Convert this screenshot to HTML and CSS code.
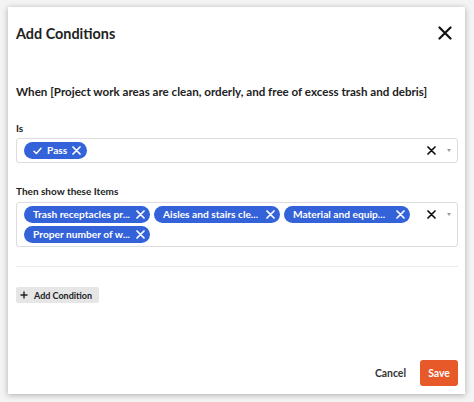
FILE: index.html
```html
<!DOCTYPE html>
<html>
<head>
<meta charset="utf-8">
<link rel="stylesheet" href="styles.css">
</head>
<body>
<div class="page">
  <div class="card">
    <div class="header">
      <h1 class="title">Add Conditions</h1>
      <button class="close" aria-label="Close">
        <svg width="14" height="14" viewBox="0 0 14 14"><path d="M1.5 1.5L12.5 12.5M12.5 1.5L1.5 12.5" stroke="#111" stroke-width="2.2" stroke-linecap="round"/></svg>
      </button>
    </div>
    <div class="content">
      <p class="when">When [Project work areas are clean, orderly, and free of excess trash and debris]</p>

      <div class="label label-is">Is</div>
      <div class="select">
        <div class="chips">
          <span class="chip chip-auto">
            <svg class="check" width="9" height="8" viewBox="0 0 9 8"><path d="M1 4.2L3.4 6.5L8 1.3" stroke="#fff" stroke-width="1.5" fill="none" stroke-linecap="round" stroke-linejoin="round"/></svg>
            <span class="chip-text">Pass</span>
            <svg class="chip-x" width="9" height="9" viewBox="0 0 9 9"><path d="M1 1L8 8M8 1L1 8" stroke="#fff" stroke-width="1.7" stroke-linecap="round"/></svg>
          </span>
        </div>
        <div class="controls">
          <svg class="clear" width="9" height="9" viewBox="0 0 9 9"><path d="M1 1L8 8M8 1L1 8" stroke="#111" stroke-width="1.7" stroke-linecap="round"/></svg>
          <span class="caret"></span>
        </div>
      </div>

      <div class="label label-then">Then show these Items</div>
      <div class="select select-multi">
        <div class="chips">
          <span class="chip chip-fixed"><span class="chip-text">Trash receptacles pr...</span><svg class="chip-x" width="9" height="9" viewBox="0 0 9 9"><path d="M1 1L8 8M8 1L1 8" stroke="#fff" stroke-width="1.7" stroke-linecap="round"/></svg></span>
          <span class="chip chip-fixed"><span class="chip-text">Aisles and stairs cle...</span><svg class="chip-x" width="9" height="9" viewBox="0 0 9 9"><path d="M1 1L8 8M8 1L1 8" stroke="#fff" stroke-width="1.7" stroke-linecap="round"/></svg></span>
          <span class="chip chip-fixed"><span class="chip-text">Material and equip...</span><svg class="chip-x" width="9" height="9" viewBox="0 0 9 9"><path d="M1 1L8 8M8 1L1 8" stroke="#fff" stroke-width="1.7" stroke-linecap="round"/></svg></span>
          <span class="chip chip-fixed"><span class="chip-text">Proper number of w...</span><svg class="chip-x" width="9" height="9" viewBox="0 0 9 9"><path d="M1 1L8 8M8 1L1 8" stroke="#fff" stroke-width="1.7" stroke-linecap="round"/></svg></span>
        </div>
        <div class="controls controls-top">
          <svg class="clear" width="9" height="9" viewBox="0 0 9 9"><path d="M1 1L8 8M8 1L1 8" stroke="#111" stroke-width="1.7" stroke-linecap="round"/></svg>
          <span class="caret"></span>
        </div>
      </div>

      <div class="divider"></div>

      <button class="add-btn">
        <svg width="8" height="8" viewBox="0 0 8 8"><path d="M4 0.5V7.5M0.5 4H7.5" stroke="#222" stroke-width="1.4"/></svg>
        <span>Add Condition</span>
      </button>
    </div>
    <div class="footer">
      <button class="cancel">Cancel</button>
      <button class="save">Save</button>
    </div>
  </div>
</div>
</body>
</html>
```

FILE: styles.css
```css
* { box-sizing: border-box; }

html, body {
  margin: 0;
  padding: 0;
  background: #f4f4f4;
  font-family: Lato, "Noto Sans", sans-serif;
  color: #222;
}

.page {
  width: 474px;
  height: 402px;
  padding: 7px 9px 8px 8px;
}

.card {
  width: 457px;
  height: 387px;
  background: #fff;
  box-shadow: 0 1px 6px rgba(0, 0, 0, 0.3);
  display: flex;
  flex-direction: column;
  padding: 0 7px 8px 8px;
}

.header {
  height: 52px;
  display: flex;
  align-items: center;
  justify-content: space-between;
  flex: none;
}

.title {
  margin: 0;
  font-size: 14.4px;
  font-weight: 700;
  color: #222;
}

.close {
  border: 0;
  background: none;
  padding: 0;
  margin-right: 6px;
  width: 14px;
  height: 14px;
  display: flex;
}

.content {
  flex: none;
}

.when {
  margin: 25px 0 0 0;
  font-size: 11.6px;
  line-height: 16px;
  font-weight: 700;
  color: #222;
}

.label {
  font-size: 10px;
  line-height: 14px;
  font-weight: 700;
  color: #222;
}

.label-is { margin-top: 21px; margin-bottom: 3px; }
.label-then { margin-top: 21px; margin-bottom: 4px; }

.select {
  border: 1px solid #dcdcdc;
  border-radius: 3px;
  padding: 3px 0 3px 7px;
  display: flex;
  align-items: center;
}

.select-multi {
  align-items: flex-start;
}

.chips {
  flex: 1;
  display: flex;
  flex-wrap: wrap;
  gap: 3px 4px;
}

.chip {
  height: 17px;
  border-radius: 9px;
  background: #3462d8;
  color: #fff;
  font-size: 10.2px;
  font-weight: 700;
  display: inline-flex;
  align-items: center;
  white-space: nowrap;
}

.chip-auto {
  padding: 0 6px 0 9px;
  gap: 5px;
}

.chip-fixed {
  width: 126px;
  padding: 0 5px 0 9px;
  justify-content: space-between;
}

.chip-text {
  line-height: 17px;
}

.chip-x { flex: none; }
.check { flex: none; }

.controls {
  display: flex;
  align-items: center;
  width: 46px;
  padding-left: 16px;
  gap: 11px;
  flex: none;
}

.controls-top {
  height: 17px;
}

.caret {
  width: 0;
  height: 0;
  border-left: 2.5px solid transparent;
  border-right: 2.5px solid transparent;
  border-top: 3px solid #999;
}

.divider {
  margin-top: 19px;
  height: 1px;
  background: #ececec;
}

.add-btn {
  margin-top: 20px;
  height: 16px;
  border: 0;
  border-radius: 2px;
  background: #e6e6e6;
  padding: 0 7px 0 4px;
  display: inline-flex;
  align-items: center;
  gap: 6px;
  font-family: Lato, "Noto Sans", sans-serif;
  font-size: 9px;
  font-weight: 700;
  color: #222;
}

.footer {
  margin-top: auto;
  display: flex;
  justify-content: flex-end;
  align-items: center;
  gap: 14px;
}

.cancel {
  border: 0;
  background: none;
  padding: 0;
  font-family: Lato, "Noto Sans", sans-serif;
  font-size: 10.4px;
  font-weight: 700;
  color: #333;
}

.save {
  width: 38px;
  height: 26px;
  border: 0;
  border-radius: 3px;
  background: #e8592a;
  color: #fff;
  font-family: Lato, "Noto Sans", sans-serif;
  font-size: 10.4px;
  font-weight: 700;
  padding: 0;
}
```
